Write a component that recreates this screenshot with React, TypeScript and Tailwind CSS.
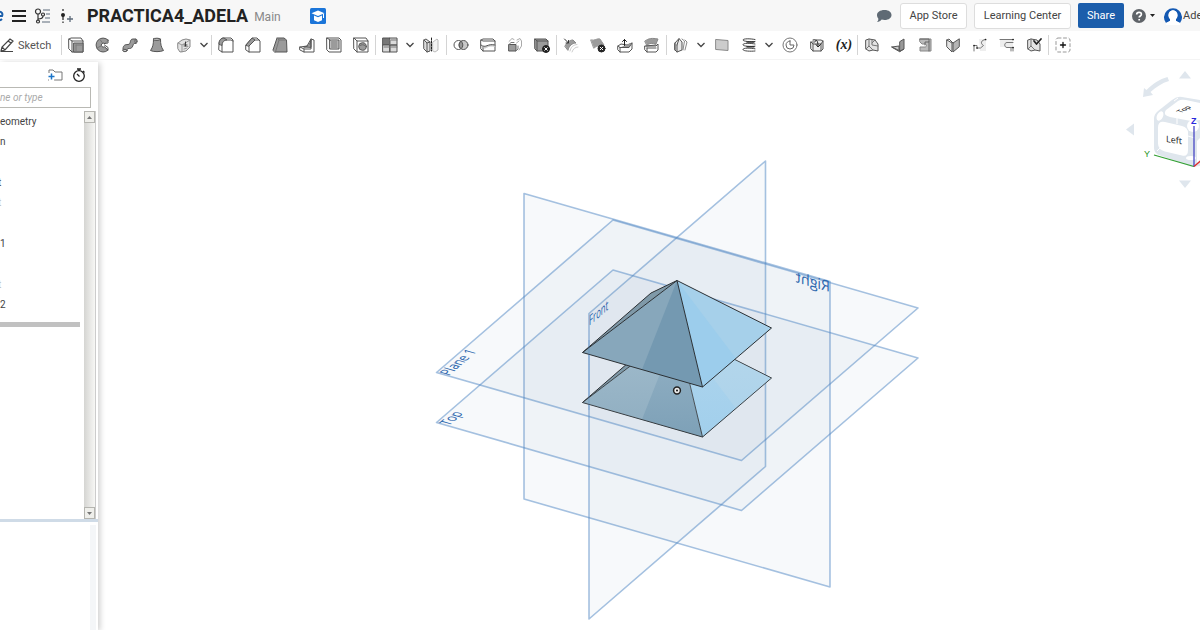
import React from "react";

const INK = "#555555";
const FILL = "#9b9b9b";
const PALE = "#c9c9c9";

type IconProps = { children: React.ReactNode; className?: string };

function Icon({ children, className = "size-4" }: IconProps) {
  return (
    <svg
      viewBox="0 0 16 16"
      className={`${className} shrink-0`}
      fill="none"
      stroke={INK}
      strokeWidth="1"
      strokeLinejoin="round"
      strokeLinecap="round"
      aria-hidden="true"
    >
      {children}
    </svg>
  );
}

type ToolDef = { label: string; art: React.ReactNode; menu?: boolean };

const solids: ToolDef[] = [
  {
    label: "Extrude",
    art: (
      <>
        <path d="M1 2l2-1h10l2 3v11H4l-3-3z" fill="#fff" />
        <path d="M1 2l3 2h11M4 4v11" />
        <path d="M6 6h9v9H6z" fill={FILL} />
        <path d="M8 8h7M8 8v7" stroke="#7b7b7b" />
      </>
    ),
  },
  {
    label: "Revolve",
    art: (
      <>
        <path d="M13 3A7 7 0 1 0 13 13L9.500 9.700A2 2 0 1 1 9.500 6.500z" fill={FILL} />
        <path d="M13 3v3L9.500 6.500M13 13v-2.500L9.500 8" />
        <path d="M5 2.500L7.500 6M2 11l4-2" stroke="#777" />
      </>
    ),
  },
  {
    label: "Sweep",
    art: (
      <>
        <path d="M1 13.500V12c0-4 2.500-4.500 5-4.500 3.500 0 1-5.500 5-5.500h3v4.500h-1.500c-2 0-1 5-5 5C5 11.500 5 12 5 13.500z" fill={FILL} />
        <ellipse cx="3" cy="13.500" rx="2" ry="1.200" fill={PALE} />
        <ellipse cx="14" cy="4.200" rx="1" ry="2.200" fill={PALE} />
      </>
    ),
  },
  {
    label: "Loft",
    art: (
      <>
        <path d="M4.500 2h7c0 5 .5 8 3 11.500C12 15 4 15 1.500 13.500 4 10 4.500 7 4.500 2z" fill={FILL} />
        <ellipse cx="8" cy="2.300" rx="3.500" ry="1.100" fill={PALE} />
      </>
    ),
  },
  {
    label: "Thicken",
    menu: true,
    art: (
      <>
        <path d="M2 6l4-3 4-1 4 1v7l-4 4-6 1-2-3z" fill="#e2e2e2" stroke="#888" />
        <path d="M2 6l4 2 8-5M6 8v7M8 9.500h4M8 12l3-1" stroke="#999" />
        <path d="M9.500 5v5M8 8h3" stroke="#333" strokeDasharray="1.500 1" />
      </>
    ),
  },
];

const modifiers: ToolDef[] = [
  {
    label: "Fillet",
    art: (
      <>
        <path d="M1 7c0-4 2-6 5-6h7l2 2v12H4l-3-2z" fill="#fff" />
        <path d="M1 7c0-4 2-6 5-6l3 2C6 3 4 5 4 8z" fill={FILL} />
        <path d="M9 3h4l2 1M4 8v7" />
      </>
    ),
  },
  {
    label: "Chamfer",
    art: (
      <>
        <path d="M1 8l6-7h5l3 3v11H4l-3-2z" fill="#fff" />
        <path d="M1 8l6-7 3 2-6 6z" fill={FILL} />
        <path d="M10 3h4M4 9v6" />
      </>
    ),
  },
  {
    label: "Draft",
    art: (
      <>
        <path d="M1 13L5 1h7l2.500 2 .5 12H3z" fill={FILL} />
        <path d="M5 1l2 2h7M7 3L3.500 15" stroke="#777" />
      </>
    ),
  },
  {
    label: "Rib",
    art: (
      <>
        <path d="M1 10l7-1 4-7 3 1v12H5l-4-2z" fill="#fff" />
        <path d="M5 10c3 0 6-2 7-7v7z" fill={FILL} />
        <path d="M1 10l4 2h7V2M5 12v3" />
      </>
    ),
  },
  {
    label: "Shell",
    art: (
      <>
        <path d="M1 1h12l2 2v12H3l-2-2z" fill="#fff" />
        <path d="M4 3h9v9H4z" fill={PALE} />
        <path d="M6 3h5v9H6z" fill={FILL} stroke="#999" />
        <path d="M1 1l3 2" />
      </>
    ),
  },
  {
    label: "Hole",
    art: (
      <>
        <path d="M1 1h12l2 3v11H4l-3-3z" fill="#fff" />
        <path d="M1 1l3 3h11M4 4v11" />
        <circle cx="9.500" cy="9.500" r="3.800" fill={FILL} />
        <path d="M7 8.500c1.500-1 3.500-1 5 0" stroke="#666" />
      </>
    ),
  },
];

const patterns: ToolDef[] = [
  {
    label: "Linear pattern",
    menu: true,
    art: (
      <>
        <path d="M1 1h7v7H1z" fill="#777" />
        <path d="M8 1h7v7H8zM1 8h7v7H1zM8 8h7v7H8z" fill="#dadada" />
        <path d="M2 3h6v5M9 3h6M2 10h6M9 10h6" stroke="#777" />
      </>
    ),
  },
  {
    label: "Mirror",
    art: (
      <>
        <path d="M1 3l2-1 4 3v9l-3 1-3-3z" fill="#ddd" />
        <path d="M1 3l3 3v9M4 6l3-1" />
        <path d="M8.500 1v13" stroke="#222" strokeDasharray="2 1" />
        <path d="M10 5l4-3 1 1v10l-3 2-2-1z" stroke="#bbb" fill="#f4f4f4" />
      </>
    ),
  },
];

const booleans: ToolDef[] = [
  {
    label: "Boolean",
    art: (
      <>
        <circle cx="5.500" cy="8" r="4.500" />
        <circle cx="10.500" cy="8" r="4.500" fill={PALE} />
        <path d="M8 4.300a4.500 4.500 0 0 1 0 7.400 4.500 4.500 0 0 1 0-7.400z" fill="#999" />
      </>
    ),
  },
  {
    label: "Split",
    art: (
      <>
        <path d="M1 3l2-1h10l2 2v10H3l-2-2z" fill="#fff" />
        <path d="M1 8c5 4 6-2 14 0v2c-8-2-8 3-13 1z" fill={PALE} stroke="none" />
        <path d="M1 3l2 1h12M1 8c5 4 6-2 14 0M3 11v3" />
      </>
    ),
  },
  {
    label: "Transform",
    art: (
      <>
        <path d="M2 7.500h7V14H2z" fill={FILL} />
        <path d="M2 7.500l2-2h3M9 14l2-2V9" stroke="#777" />
        <path d="M2 4.500l3-3 2 1M10 3l3-1.500L14.500 4v5L12 13M9.500 6L12 4" stroke="#aaa" />
      </>
    ),
  },
  {
    label: "Delete part",
    art: (
      <>
        <path d="M1 2h11l2 2v10H3l-2-2z" fill={FILL} />
        <path d="M1 2l2 2h11M3 4v10" />
        <circle cx="12" cy="12" r="3.500" fill="#222" stroke="#222" />
        <path d="M10.700 10.700l2.600 2.600M13.300 10.700l-2.600 2.600" stroke="#fff" />
      </>
    ),
  },
];

const faces: ToolDef[] = [
  {
    label: "Modify fillet",
    art: (
      <>
        <path d="M2 9c2-4 5-6 8-6l3 3c-4 0-7 3-8 7z" fill={FILL} stroke="#888" />
        <path d="M7 14c1-4 3-6 7-6.500M9 15c1-3 3-5 6-5" stroke="#ccc" />
        <path d="M1.500 2l4 4M5.500 3.500V6H3" stroke="#333" />
      </>
    ),
  },
  {
    label: "Delete face",
    art: (
      <>
        <path d="M1 3c4 1 6-2 9-1l4 6c-4 1-6 0-10 3z" fill={FILL} stroke="#999" />
        <circle cx="11.500" cy="11.500" r="3.500" fill="#222" stroke="#222" />
        <path d="M10.200 10.200l2.600 2.600M12.800 10.200l-2.600 2.600" stroke="#fff" />
      </>
    ),
  },
  {
    label: "Move face",
    art: (
      <>
        <path d="M1 9l3-2 6 1 5-2v6l-3 3H3l-2-2z" fill="#fff" />
        <path d="M3 10.500h9L14.500 6 9 8z" fill={FILL} stroke="none" />
        <path d="M1 9l2 1.500h9L15 6M3 10.500V15" />
        <path d="M7.500 8.500V2.500M5.500 4.500l2-2 2 2" stroke="#222" />
      </>
    ),
  },
  {
    label: "Replace face",
    art: (
      <>
        <path d="M1 9h11l2-2v6l-2 2H3l-2-2z" fill="#fff" />
        <path d="M1 4c4-3 7-3 13-2l-2 5c-4-1-6-1-9 1z" fill={FILL} stroke="#888" />
        <path d="M3 11h9M3 11v4M2 9l10-1" />
      </>
    ),
  },
];

const references: ToolDef[] = [
  {
    label: "Offset surface",
    menu: true,
    art: (
      <>
        <path d="M2 6l4-4.500L9 5v8l-5 2-2-2z" fill="#e8e8e8" />
        <path d="M4 8l2-6M4 8v7M2 6v7" />
        <path d="M9 2l2.500 2L10 13M12 3l2 2-2 8" stroke="#888" />
      </>
    ),
  },
  {
    label: "Plane",
    art: <path d="M2 2.500l12 1v10L2 12.500z" fill="#ccc" stroke="#8a8a8a" />,
  },
  {
    label: "Helix",
    menu: true,
    art: (
      <>
        <path d="M14 2.500C9 1.500 2 1.500 2 3s8 2 12 1.500M14 7C9 6 2 6 2 7.700s8 2 12 1.500M14 11.800c-5-1-12-1-12 .7s8 2 12 1.500" stroke="#444" />
        <path d="M6 5h7M6 9.800h7" stroke="#333" strokeWidth="1.400" />
      </>
    ),
  },
  {
    label: "Curve",
    art: (
      <>
        <circle cx="8" cy="8" r="7" stroke="#777" />
        <path d="M8 4v4h4a4 4 0 1 1-4-4z" fill="#fff" stroke="#666" />
      </>
    ),
  },
  {
    label: "Derived",
    art: (
      <>
        <path d="M2 5h4l1-2h5l2 1v8l-2 2H4l-2-2z" fill="#eee" />
        <path d="M2 5l2 2h8l2-3M4 7v7M12 7v7" />
        <path d="M4 3c4-1 5 1 5 6M7 7.500L9 10l2.500-2.500" stroke="#222" />
      </>
    ),
  },
];

const sheetMetal: ToolDef[] = [
  {
    label: "Sheet metal model",
    art: (
      <>
        <path d="M2 3l3-1 6 1 3 4v7l-5-1-4 1-3-2z" fill="#e4e4e4" />
        <path d="M5 2v7l-3 3M5 9l4 4M8 3v5l6 1M11 3l-3 3" stroke="#777" />
      </>
    ),
  },
  {
    label: "Flange",
    art: (
      <>
        <path d="M1 10l7-1v4l5-1-4 2.500z" fill="#ccc" />
        <path d="M9 4.500L13 2v10l-4 2z" fill="#999" />
        <path d="M1 10l8 4" />
      </>
    ),
  },
  {
    label: "Hem",
    art: (
      <>
        <path d="M2 2h11v12H2v-4h5c2 0 2-3 0-3H4L2 5z" fill="#bbb" stroke="#888" />
        <path d="M2 2h9v3H7v3M11 5v9" stroke="#666" />
      </>
    ),
  },
  {
    label: "Bend",
    art: (
      <>
        <path d="M2 3l5 3v9L2 10z" fill="#e4e4e4" />
        <path d="M14 2L8 6v9l6-5z" fill="#b5b5b5" />
        <path d="M2 3l2-1 4 4" />
      </>
    ),
  },
  {
    label: "Joint",
    art: (
      <>
        <path d="M7 2h7v12H8z" fill="#eee" stroke="none" />
        <path d="M2 14V8.500h3V11h3.500l3-2.500C8 6.500 9 3 13.500 2.500" stroke="#777" />
        <path d="M2 8.500h.1M13.500 2.500h.1M5 11h.1" stroke="#222" strokeWidth="1.700" />
      </>
    ),
  },
  {
    label: "Corner",
    art: (
      <>
        <path d="M1 2h13v8H1z" fill="#eee" stroke="none" />
        <path d="M1 2.500h13M14 5.500H8c-3 0-3 5 0 5h6V14M12 10.500V14" stroke="#777" />
        <path d="M14 2.500h.1M14 10.500h.1" stroke="#222" strokeWidth="1.700" />
      </>
    ),
  },
  {
    label: "Finish",
    art: (
      <>
        <path d="M2 3l3-1 6 1 3 4v7l-5-1-4 1-3-2z" fill="#e4e4e4" />
        <path d="M5 2v7l-3 3M5 9l4 4" stroke="#777" />
        <path d="M8 4l2.500 3L15 2" stroke="#222" strokeWidth="1.700" />
      </>
    ),
  },
];

function Tool({ label, art, menu }: ToolDef) {
  return (
    <>
      <button type="button" aria-label={label} className="flex size-4 shrink-0">
        <Icon>{art}</Icon>
      </button>
      {menu && (
        <button type="button" aria-label={`${label} menu`} className="-mr-[3px] -ml-1 shrink-0">
          <svg viewBox="0 0 10 10" className="size-2.5" fill="none" stroke="#444" strokeWidth="1.300">
            <path d="M1.500 3L5 6.500 8.500 3" />
          </svg>
        </button>
      )}
    </>
  );
}

function Group({ tools, className = "px-1.5", children }: { tools: ToolDef[]; className?: string; children?: React.ReactNode }) {
  return (
    <div className={`flex h-5 shrink-0 items-center gap-[11px] border-l border-[#d4d4d4] ${className}`}>
      {tools.map((t) => (
        <Tool key={t.label} {...t} />
      ))}
      {children}
    </div>
  );
}

function Header() {
  return (
    <header className="flex h-[31px] shrink-0 items-center overflow-hidden bg-[#f7f7f7] text-[11px] text-[#444]">
      <svg viewBox="0 0 4 12" className="h-3 w-1 shrink-0" aria-hidden="true">
        <path d="M-2 2C2 1 3 4 2 6H-2M-2 10c2 1 3 0 4-1" fill="none" stroke="#1b5faa" strokeWidth="2" />
      </svg>
      <button type="button" aria-label="Menu" className="ml-2 shrink-0">
        <svg viewBox="0 0 14 12" className="h-3 w-3.5" stroke="#222" strokeWidth="2">
          <path d="M0 1h14M0 6h14M0 11h14" />
        </svg>
      </button>
      <button type="button" aria-label="Versions" className="ml-2 shrink-0">
        <svg viewBox="0 0 18 16" className="h-4 w-[18px]" fill="none" stroke="#333" strokeWidth="1.200">
          <circle cx="4" cy="3.500" r="2.500" />
          <path d="M4 6v7M4 11c4 0 5-1 5-3" />
          <circle cx="4" cy="13.500" r="1.500" />
          <circle cx="9" cy="6.500" r="1.500" />
          <path d="M9 2h7M12 6h4M11 10h5M8 14h8" stroke="#5d6b7a" />
        </svg>
      </button>
      <button type="button" aria-label="Create version" className="ml-2 shrink-0">
        <svg viewBox="0 0 14 16" className="h-4 w-3.5" fill="none" stroke="#333" strokeWidth="1.300">
          <path d="M3 1v2M3 7v5M3 13.500v1.500" />
          <circle cx="3" cy="7" r="2" fill="#222" stroke="none" />
          <path d="M7 11h6M10 8v6" stroke="#5d6b7a" />
        </svg>
      </button>
      <h1 className="ml-[13px] shrink-0 text-lg font-bold text-[#222]">PRACTICA4_ADELA</h1>
      <span className="ml-1.5 shrink-0 pt-[3px] text-[12px] text-[#888]">Main</span>
      <a href="#learn" aria-label="Education" className="ml-[29px] shrink-0">
        <svg viewBox="0 0 16 16" className="size-4">
          <rect width="16" height="16" rx="1.500" fill="#1b75d9" />
          <path d="M8 2.500l6.500 2.800L8 8.100 1.500 5.300z" fill="#fff" />
          <path d="M4 7.500l4 1.800 4-1.800v4.700L8 14l-4-1.800z" fill="#fff" />
          <path d="M13.500 6v4" stroke="#fff" />
        </svg>
      </a>
      <div className="ml-auto flex shrink-0 items-center">
        <button type="button" aria-label="Comments">
          <svg viewBox="0 0 16 14" className="h-3.5 w-4" fill="#5f6a74">
            <path d="M8.500 1C13 1 15.500 3.300 15.500 6S13 11 8.500 11c-1 0-2-.1-2.800-.4C4.500 12 3 12.800 1 13c1-1 1.500-2.200 1.300-3.600C1.400 8.500 1 7.300 1 6c0-2.700 3-5 7.500-5z" />
          </svg>
        </button>
        <button type="button" className="ml-2 h-[26px] w-[67px] rounded-[3px] border border-[#ddd] bg-white pt-0.5">App Store</button>
        <button type="button" className="ml-[7px] h-[26px] w-[97px] rounded-[3px] border border-[#ddd] bg-white pt-0.5">Learning Center</button>
        <button type="button" className="ml-[7px] h-[25px] w-[46px] rounded-[2px] bg-[#1b5dab] pt-0.5 text-white">Share</button>
        <button type="button" aria-label="Help" className="ml-2 flex items-center gap-1">
          <svg viewBox="0 0 14 14" className="size-3.5">
            <circle cx="7" cy="7" r="7" fill="#5f6368" />
            <path d="M4.700 5.500C4.700 2.600 9.500 2.600 9.400 5.300 9.400 7 7.200 6.900 7.200 8.600M7.200 10v1.500" fill="none" stroke="#fff" strokeWidth="1.700" />
          </svg>
          <svg viewBox="0 0 5 3" className="h-[3px] w-[5px]">
            <path d="M0 0h5L2.500 3z" fill="#222" />
          </svg>
        </button>
        <button type="button" className="ml-2 flex w-[37px] items-center pt-px">
          <svg viewBox="0 0 20 18" className="h-[18px] w-5 shrink-0">
            <path d="M3 16A9 9 0 1 1 17 16L13 14V12a4.500 5 0 1 0-6 0v2z" fill="#1459b3" />
            <path d="M7 12a4.500 5 0 1 1 6 0v2l4 2v2H3v-2l4-2z" fill="#fff" />
          </svg>
          Ade
        </button>
      </div>
    </header>
  );
}

function Toolbar() {
  return (
    <nav aria-label="Features" className="flex h-[29px] shrink-0 items-center overflow-hidden border-b border-[#f4f4f4] bg-white text-[11px] text-[#555]">
      <button type="button" className="flex w-[61px] shrink-0 items-center gap-1">
        <svg viewBox="0 0 14 16" className="h-4 w-3.5" fill="none" stroke="#444" strokeWidth="1.200">
          <path d="M1 14l1-4 8-8 3 2-8 9zM8 4l3 2M1 14.500h12M2 10l3 3" />
        </svg>
        <span className="pt-0.5">Sketch</span>
      </button>
      <Group tools={solids} className="pr-[5px] pl-1.5" />
      <Group tools={modifiers} />
      <Group tools={patterns} className="pr-[7px] pl-1.5" />
      <Group tools={booleans} />
      <Group tools={faces} />
      <Group tools={references} className="pr-[5px] pl-1.5">
        <button type="button" aria-label="Variable" className="flex w-4 shrink-0 justify-center font-['Liberation_Serif',serif] text-sm leading-4 font-bold whitespace-nowrap text-[#222] italic">
          (x)
        </button>
      </Group>
      <Group tools={sheetMetal} />
      <Group tools={[]}>
        <button type="button" aria-label="Add custom features">
          <Icon>
            <rect x="1" y="1" width="14" height="14" rx="2" stroke="#999" strokeDasharray="3 2.500" />
            <path d="M8 5.500v5M5.500 8h5" stroke="#111" strokeWidth="1.300" />
          </Icon>
        </button>
      </Group>
    </nav>
  );
}

type Row = { name: string; muted?: boolean; scrolled?: boolean };

const featureRows: Row[] = [
  { name: "eometry" },
  { name: "n" },
  { name: "" },
  { name: "t", scrolled: true },
  { name: "t", muted: true, scrolled: true },
  { name: "" },
  { name: "1" },
  { name: "" },
  { name: "t", muted: true, scrolled: true },
  { name: "2" },
];

function ScrollButton({ up }: { up?: boolean }) {
  return (
    <button type="button" aria-label={up ? "Scroll up" : "Scroll down"} className="flex h-3 w-full items-center justify-center border border-[#b5b5b0] bg-[#efefeb]">
      <svg viewBox="0 0 5 3" className="h-[3px] w-[5px]" fill="#777">
        <path d={up ? "M0 3h5L2.500 0z" : "M0 0h5L2.500 3z"} />
      </svg>
    </button>
  );
}

function Sidebar() {
  return (
    <aside className="z-10 mt-0.5 flex w-[98px] shrink-0 flex-col bg-white text-[10px] text-[#444] shadow-[2px_1px_6px_rgba(0,0,0,0.2)]">
      <div className="flex h-[25px] shrink-0 items-center justify-end gap-[9px] pr-3">
        <button type="button" aria-label="Add folder">
          <svg viewBox="0 0 16 12" className="h-3 w-4" fill="none">
            <path d="M2 4V1h4l2 2h7v8H8" stroke="#777" />
            <path d="M4.500 4.500v6M1.500 7.500h6" stroke="#1b75c9" strokeWidth="1.500" />
            <path d="M1 11h1M7 11h1" stroke="#888" />
          </svg>
        </button>
        <button type="button" aria-label="Rollback timer">
          <svg viewBox="0 0 14 14" className="size-3.5" fill="none" stroke="#222" strokeWidth="1.300">
            <circle cx="7" cy="8" r="5.300" />
            <path d="M5 1h4M7 1v2M5 6l2.500 2.500M11 3l1.500 1.500" />
          </svg>
        </button>
      </div>
      <input aria-label="Filter by name or type" placeholder="ne or type" className="h-[21px] w-[91px] shrink-0 border border-l-0 border-[#b9b9b4] bg-white text-[10px] outline-none placeholder:text-[#aaa] placeholder:italic" />
      <div className="mt-[3px] flex h-[408px] shrink-0">
        <div className="min-w-0 flex-1 overflow-hidden">
          <ul className="grid h-[204px] grid-rows-10">
            {featureRows.map((row, i) => (
              <li key={i} className={`flex items-center ${row.muted ? "text-[#bbb]" : ""} ${row.scrolled ? "-ml-0.5" : ""}`}>
                {row.name}
              </li>
            ))}
          </ul>
          <div className="mt-[7px] h-[5px] w-20 bg-[#c1c1c1]" />
        </div>
        <div className="mr-0.5 flex w-3 flex-col justify-between border-r border-[#ccc] bg-linear-to-r from-[#d5d5d2] to-[#f7f7f5]">
          <ScrollButton up />
          <ScrollButton />
        </div>
      </div>
      <div className="h-[3px] shrink-0 bg-[#cfdbe7]" />
      <div className="mt-[3px] mr-0.5 w-1.5 flex-1 self-end bg-[#f4f6f8]" />
    </aside>
  );
}

function Pyramid() {
  return (
    <>
      <path d="M677 280.500L651 293 582.500 352.500z" fill="#7f99a8" />
      <path d="M677 280.500L582.500 352.500 702.500 387z" fill="#87a7bb" />
      <path d="M677 280.500L642 369.500 702.500 387z" fill="#7499b1" />
      <path d="M677 280.500L702.500 387 771.500 328z" fill="#a6d0ea" />
      <path d="M677 280.500L702.500 387 736 358.500z" fill="#9ccdec" />
      <path
        d="M677 280.500L651 293 582.500 352.500 702.500 387 771.500 328zL582.500 352.500M677 280.500L702.500 387"
        fill="none"
        stroke="#2b3034"
        strokeWidth="1"
        strokeLinejoin="round"
      />
    </>
  );
}

function Viewport() {
  return (
    <svg viewBox="98 60 1102 570" className="block w-full" role="img" aria-label="Part view">
      <defs>
        <linearGradient id="contact-shade" x1="0" y1="0" x2="0" y2="1">
          <stop offset="0" stopColor="#d3e4ee" stopOpacity="0.35" />
          <stop offset="1" stopColor="#d3e4ee" stopOpacity="0.1" />
        </linearGradient>
      </defs>
      <g fill="#5b85b5" fillOpacity="0.052" stroke="#4d86c4" strokeOpacity="0.5" strokeWidth="1.600" strokeLinejoin="round">
        <path d="M524 193.500L830 281.500V587L524 499z" />
        <path d="M765.500 161V466.500L589 619V313.500z" />
        <path d="M613 220L918 308 741.500 460.500 436.500 372.500z" />
        <path d="M613 270L918 358 741.500 510.500 436.500 422.500z" />
      </g>
      <g fill="#2a65ad" fontFamily="'Open Sans', sans-serif" fontSize="15">
        <text transform="matrix(-0.96 -0.277 0 1 830 292)" fontWeight="500">
          Right
        </text>
        <text transform="matrix(0.553 -0.48 0 1 589 326)" fontSize="14">
          Front
        </text>
        <text transform="matrix(0.553 -0.48 0.96 0.277 449 376)">Plane 1</text>
        <text transform="matrix(0.553 -0.48 0.96 0.277 449 426)">Top</text>
      </g>
      <g transform="translate(0 50)">
        <Pyramid />
        <path d="M677 280.500L582.500 352.500 702.500 387 771.500 328z" fill="url(#contact-shade)" />
      </g>
      <Pyramid />
      <path d="M589 340v70" stroke="#4d86c4" strokeOpacity="0.3" strokeWidth="1.500" />
      <circle cx="677" cy="390.500" r="3.400" fill="#eee" stroke="#222" strokeWidth="1.500" />
      <circle cx="677" cy="390.500" r="1" fill="#111" />
    </svg>
  );
}

function ViewCube() {
  return (
    <svg viewBox="1120 62 80 134" className="absolute top-0.5 right-0 h-[134px] w-20" role="img" aria-label="View cube">
      <g fill="#dfe6ed">
        <path d="M1185 71l6 7.500h-12zM1185 188l6-7.500h-12zM1126 129.500l8-6v12z" />
        <path d="M1143 97l1-9 2.500 2c6-6 13-11 21-13l1.500 4c-7 2-13 6-18.500 11l2.500 3z" />
        <path d="M1154 119q0-5 4-8l14-11q5-4 10-3l18 3v66l-8 1-33-12q-5-2-5-7z" />
      </g>
      <g fill="#fff">
        <path d="M1166 110l12-9q3-2 8-1l14 3v17l-9 1-21-4q-8-2-4-7z" />
        <path d="M1165 122l17 4q6 1.500 6 7v17q0 7-6 5.500l-17-4q-7-2-7-8v-16q0-7 7-5.500z" />
        <ellipse cx="1160" cy="116" rx="3" ry="5" transform="rotate(25 1160 116)" />
        <circle cx="1193" cy="126" r="6" />
        <ellipse cx="1191" cy="158" rx="5" ry="2" />
        <path d="M1200 138v22l-3 3v-22z" />
      </g>
      <path d="M1177 118v6M1188 136l7 2M1174 101l4-3M1157 151l3-3" stroke="#fff" />
      <g fontFamily="'Open Sans', sans-serif" fill="#222">
        <text fontSize="9" transform="matrix(1 0.14 0 1 1166 142)">
          Left
        </text>
        <text fontSize="8" fontWeight="600" transform="matrix(0.75 -0.4 0.9 0.3 1181 113)">
          Top
        </text>
      </g>
      <path d="M1154 155l40 11.500" stroke="#31a031" strokeWidth="1.300" />
      <path d="M1194 126v40.500" stroke="#4747c4" strokeWidth="1.300" />
      <path d="M1194 166.500l7-6" stroke="#e02828" strokeWidth="1.300" />
      <g fontFamily="'Liberation Sans', sans-serif" fontSize="9">
        <text x="1144" y="157" fill="#259525">
          Y
        </text>
        <text x="1191" y="124" fill="#2929dd" fontWeight="700">
          Z
        </text>
      </g>
    </svg>
  );
}

export default function App() {
  return (
    <div className="flex min-h-screen flex-col bg-white font-['Roboto',sans-serif]">
      <Header />
      <Toolbar />
      <div className="flex flex-1 overflow-hidden">
        <Sidebar />
        <main className="relative min-w-0 flex-1">
          <Viewport />
          <ViewCube />
        </main>
      </div>
    </div>
  );
}
